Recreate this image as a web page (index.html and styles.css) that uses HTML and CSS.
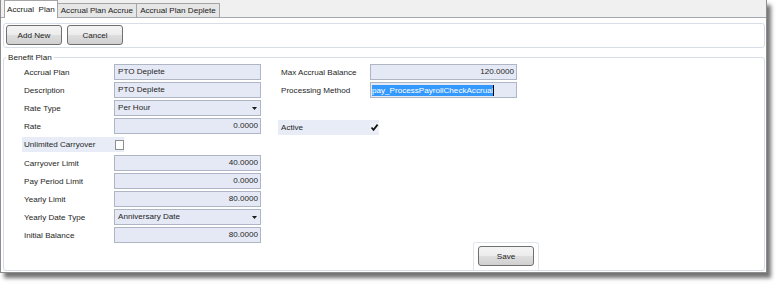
FILE: index.html
```html
<html>
<head>
    <title>Accrual Plan</title>
    <link rel="stylesheet" href="styles.css">
</head>
<body>

    <div class="window">
        <div class="tabs">
            <div class="tab active">Accrual&nbsp; Plan</div>
            <div class="tab">Accrual Plan Accrue</div>
            <div class="tab">Accrual Plan Deplete</div>
        </div>
        <div class="pane">
            <div class="toolbar">
                <button class="btn">Add New</button>
                <button class="btn">Cancel</button>
            </div>
            <fieldset class="group">
                <legend>Benefit Plan</legend>
                <div class="cols">
                    <div class="col">
                        <div class="row"><span class="lbl">Accrual Plan</span><div class="field">PTO Deplete</div></div>
                        <div class="row"><span class="lbl">Description</span><div class="field">PTO Deplete</div></div>
                        <div class="row"><span class="lbl">Rate Type</span><div class="field select"><span>Per Hour</span><svg width="5" height="3" viewBox="0 0 5 3"><polygon points="0,0 5,0 2.5,3" fill="#1a1a1a"/></svg></div></div>
                        <div class="row"><span class="lbl">Rate</span><div class="field num">0.0000</div></div>
                        <div class="check-row"><span class="lbl">Unlimited Carryover</span><span class="box"></span></div>
                        <div class="row"><span class="lbl">Carryover Limit</span><div class="field num">40.0000</div></div>
                        <div class="row"><span class="lbl">Pay Period Limit</span><div class="field num">0.0000</div></div>
                        <div class="row"><span class="lbl">Yearly Limit</span><div class="field num">80.0000</div></div>
                        <div class="row"><span class="lbl">Yearly Date Type</span><div class="field select"><span>Anniversary Date</span><svg width="5" height="3" viewBox="0 0 5 3"><polygon points="0,0 5,0 2.5,3" fill="#1a1a1a"/></svg></div></div>
                        <div class="row"><span class="lbl">Initial Balance</span><div class="field num">80.0000</div></div>
                    </div>
                    <div class="col right">
                        <div class="row"><span class="lbl">Max Accrual Balance</span><div class="field num">120.0000</div></div>
                        <div class="row"><span class="lbl">Processing Method</span><div class="field focus"><span class="sel">pay_ProcessPayrollCheckAccrual</span><span class="caret"></span></div></div>
                        <div class="row"></div>
                        <div class="check-row"><span class="lbl">Active</span><svg class="tick" width="9" height="9" viewBox="0 0 9 9"><path d="M1.5 4.5 L3.5 6.8 L7.6 1.6" fill="none" stroke="#111" stroke-width="1.7"/></svg></div>
                    </div>
                </div>
                <div class="footer">
                    <div class="save-panel"><button class="btn">Save</button></div>
                </div>
            </fieldset>
        </div>
    </div>

</body>
</html>
```

FILE: styles.css
```css
body { margin: 0; background: #fff; font-family: "Liberation Sans", Arial, sans-serif; font-size: 8.1px; color: #262626; }
.window { width: 767px; box-sizing: border-box; border: 1px solid #8d8d8d; border-top: none; background: #fff; box-shadow: 4px 5px 4px rgba(0, 0, 0, 0.55); }
.tabs { display: flex; align-items: flex-end; height: 17px; padding-left: 3px; background: #f0f0f0; border-bottom: 1px solid #a2a7b0; }
.tab { height: 13px; line-height: 13px; padding: 0 3px; border: 1px solid #a5a5a5; border-bottom: none; background: #e6e6e6; color: #222; white-space: nowrap; }
.tab + .tab { margin-left: -1px; }
.tab.active { height: 17px; line-height: 17px; padding: 0 2px; margin-bottom: -1px; background: #fff; }
.pane { padding: 0 1px 1px 2px; }
.toolbar { display: flex; gap: 5px; margin-top: 5px; padding: 1px 2px 2px; border: 1px solid #d8dee7; border-radius: 3px; }
.btn { width: 56px; height: 20px; padding: 0; border: 1px solid #707070; border-radius: 3px; background: linear-gradient(#f4f4f4, #ececec 50%, #dedede 50%, #d0d0d0); font: inherit; color: #1e1e1e; }
.group { margin: 4px 0 0 0; padding: 0; border: 1px solid #d8dee7; border-radius: 3px; min-width: 0; }
.group legend { margin-left: 2px; padding: 0 2px; line-height: 11px; color: #222; }
.cols { display: flex; padding-left: 20px; }
.col { display: flex; flex-direction: column; }
.col.right { margin-left: 17px; }
.row { display: flex; align-items: center; height: 18px; }
.right .row { padding-left: 3px; }
.lbl { width: 90px; flex: none; }
.right .lbl { width: 89px; }
.field { width: 147px; height: 16px; box-sizing: border-box; padding: 0 3px; line-height: 14px; border: 1px solid #aeb5c3; background: #e5e9f5; color: #1e1e1e; white-space: nowrap; overflow: hidden; }
.field.num { text-align: right; padding-right: 2px; }
.field.select { display: flex; align-items: center; justify-content: space-between; padding-right: 3px; }
.field.focus { display: flex; align-items: center; padding-left: 1px; }
.sel { background: #3399ff; color: #fff; line-height: 11px; }
.caret { width: 1px; height: 11px; background: #000; }
.check-row { display: flex; align-items: center; height: 15px; width: 102px; margin: 2px 0 2px -2px; padding-left: 2px; box-sizing: border-box; background: #e8ecf7; }
.col .check-row .lbl { width: 91px; }
.right .check-row { margin: 3px 0 0 0; width: 101px; padding-left: 3px; }
.right .check-row .lbl { width: 89px; }
.box { width: 8px; height: 8px; border: 1px solid #8f8f8f; background: #fff; }
.tick { background: #eef1f8; }
.footer { display: flex; margin-top: -2px; padding-left: 469px; }
.save-panel { padding: 3px 4px 4px; border: 1px solid #e0e5ec; border-bottom: none; border-radius: 3px 3px 0 0; }
```
